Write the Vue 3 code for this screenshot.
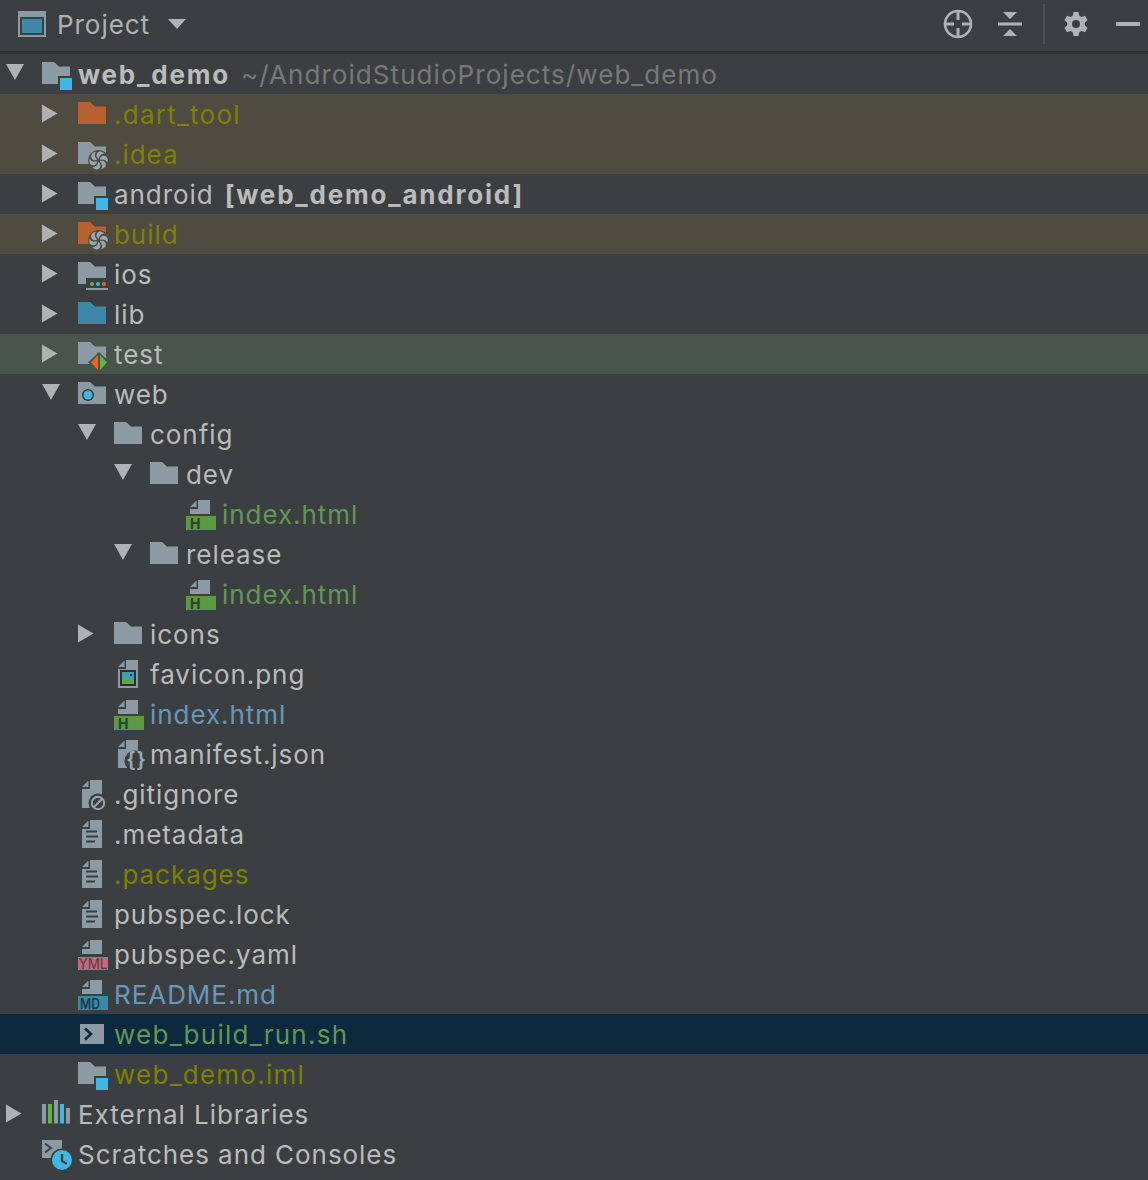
<script setup>
const nodes = [
  { depth: 0, arrow: 'down', icon: 'folder', badge: 'module', root: true, label: 'web_demo', hint: '~/AndroidStudioProjects/web_demo' },
  { depth: 1, arrow: 'right', icon: 'folder', tint: 'orange', label: '.dart_tool', color: 'olive', bg: 'ignored' },
  { depth: 1, arrow: 'right', icon: 'folder', badge: 'spin', label: '.idea', color: 'olive', bg: 'ignored' },
  { depth: 1, arrow: 'right', icon: 'folder', badge: 'module', label: 'android', extra: '[web_demo_android]' },
  { depth: 1, arrow: 'right', icon: 'folder', tint: 'orange', badge: 'spin', label: 'build', color: 'olive', bg: 'ignored' },
  { depth: 1, arrow: 'right', icon: 'folder', badge: 'ios', label: 'ios' },
  { depth: 1, arrow: 'right', icon: 'folder', tint: 'blue', label: 'lib' },
  { depth: 1, arrow: 'right', icon: 'folder', badge: 'test', label: 'test', bg: 'tested' },
  { depth: 1, arrow: 'down', icon: 'folder', badge: 'web', label: 'web' },
  { depth: 2, arrow: 'down', icon: 'folder', label: 'config' },
  { depth: 3, arrow: 'down', icon: 'folder', label: 'dev' },
  { depth: 4, icon: 'html', label: 'index.html', color: 'green' },
  { depth: 3, arrow: 'down', icon: 'folder', label: 'release' },
  { depth: 4, icon: 'html', label: 'index.html', color: 'green' },
  { depth: 2, arrow: 'right', icon: 'folder', label: 'icons' },
  { depth: 2, icon: 'png', label: 'favicon.png' },
  { depth: 2, icon: 'html', label: 'index.html', color: 'blue' },
  { depth: 2, icon: 'json', label: 'manifest.json' },
  { depth: 1, icon: 'ignore', label: '.gitignore' },
  { depth: 1, icon: 'text', label: '.metadata' },
  { depth: 1, icon: 'text', label: '.packages', color: 'olive' },
  { depth: 1, icon: 'text', label: 'pubspec.lock' },
  { depth: 1, icon: 'yml', label: 'pubspec.yaml' },
  { depth: 1, icon: 'md', label: 'README.md', color: 'blue' },
  { depth: 1, icon: 'shell', label: 'web_build_run.sh', color: 'green', bg: 'selected' },
  { depth: 1, icon: 'folder', badge: 'module', label: 'web_demo.iml', color: 'olive' },
  { depth: 0, arrow: 'right', icon: 'libs', label: 'External Libraries' },
  { depth: 0, icon: 'scratch', label: 'Scratches and Consoles' }
]

const bladeAngles = [0, 60, 120, 180, 240, 300]
const fileBody = 'M12 6H24V34H4V15H12Z'
const fileEar = 'M4 13L10.5 6.5V13Z'
</script>

<template>
  <div class="panel">
    <header class="toolbar">
      <svg class="tool-icon" width="28" height="26" viewBox="0 0 28 26">
        <path class="gray" d="M0 0H28V26H0ZM2 6V24H26V6Z" fill-rule="evenodd" />
        <rect x="4" y="8" width="20" height="14" fill="#3d87a8" />
      </svg>
      <span class="toolbar-title">Project</span>
      <svg class="caret" width="18" height="10" viewBox="0 0 18 10"><path d="M0 0H18L9 10Z" /></svg>
      <div class="toolbar-actions">
        <svg width="30" height="30" viewBox="0 0 30 30">
          <circle cx="15" cy="15" r="13" fill="none" stroke="#afb1b3" stroke-width="2.6" />
          <path d="M15 2V11M15 19V28M2 15H11M19 15H28" stroke="#afb1b3" stroke-width="3" />
        </svg>
        <svg width="24" height="30" viewBox="0 0 24 30">
          <path d="M0 13.5H24V16.5H0ZM5 3H19L12 10ZM12 20L19 27H5Z" fill="#afb1b3" />
        </svg>
        <span class="divider"></span>
        <svg width="26" height="26" viewBox="0 0 26 26">
          <path d="M10.5 1H15.5L16.2 4.6L18.6 6L22 4.8L24.5 9.2L21.8 11.5V14.5L24.5 16.8L22 21.2L18.6 20L16.2 21.4L15.5 25H10.5L9.8 21.4L7.4 20L4 21.2L1.5 16.8L4.2 14.5V11.5L1.5 9.2L4 4.8L7.4 6L9.8 4.6ZM13 9A4 4 0 1 0 13 17A4 4 0 1 0 13 9Z" fill="#afb1b3" fill-rule="evenodd" />
        </svg>
        <span class="minimize"></span>
      </div>
    </header>

    <div class="tree">
      <div
        v-for="(node, i) in nodes"
        :key="i"
        class="row"
        :class="node.bg"
        :style="{ paddingLeft: 6 + node.depth * 36 + 'px' }"
      >
        <span class="arrow">
          <svg v-if="node.arrow === 'right'" width="16" height="40" viewBox="0 0 16 40"><path d="M0 10.5L15.5 19.5L0 28.5Z" /></svg>
          <svg v-else-if="node.arrow === 'down'" width="18" height="40" viewBox="0 0 18 40"><path d="M0 10H18L9 26Z" /></svg>
        </span>

        <svg class="icon" width="36" height="40" viewBox="0 0 36 40">
          <template v-if="node.icon === 'folder'">
            <path :class="node.tint || 'gray'" d="M0 8H12L17 12.5H28V30H0Z" />
            <g v-if="node.badge === 'module'">
              <rect class="cut" x="16" y="22" width="14" height="14" />
              <rect x="18" y="24" width="12" height="12" fill="#40b6e0" />
            </g>
            <g v-else-if="node.badge === 'spin'">
              <circle class="cut" cx="20.5" cy="26.5" r="10.5" />
              <path
                v-for="a in bladeAngles"
                :key="a"
                class="blade"
                :transform="`translate(20.5 26.5) rotate(${a})`"
                d="M0 -1.5C-3 -3.5 -2.6 -7.8 1 -8.9C3 -9.2 5 -8.2 6.2 -6.6C3 -7 1 -5 0 -1.5Z"
              />
            </g>
            <g v-else-if="node.badge === 'ios'">
              <rect class="cut" x="8" y="24" width="22" height="12" />
              <circle cx="14" cy="30" r="2" fill="#62b543" />
              <circle cx="20" cy="30" r="2" fill="#40b6e0" />
              <circle cx="26" cy="30" r="2" fill="#f26522" />
              <rect class="gray" x="8" y="34" width="22" height="2" />
            </g>
            <g v-else-if="node.badge === 'test'">
              <path class="cut" d="M10 28.5L21 18L32 28.5L21 39Z" />
              <path d="M13 28.5L20 21V36Z" fill="#f26522" />
              <path d="M22 21L29 28.5L22 36Z" fill="#62b543" />
            </g>
            <g v-else-if="node.badge === 'web'">
              <circle cx="10" cy="21" r="6" fill="#2f3336" />
              <circle cx="10" cy="21" r="4.5" fill="#40b6e0" />
            </g>
          </template>

          <template v-else-if="node.icon === 'html' || node.icon === 'yml' || node.icon === 'md'">
            <path class="gray" d="M12 6H24V20H4V15H12Z" />
            <path class="gray" d="M4 13L10.5 6.5V13Z" />
            <template v-if="node.icon === 'html'">
              <rect x="0" y="22" width="30" height="14" fill="#599a42" />
              <text class="badge-text" x="4" y="34.5" font-size="14" fill="#28432a">H</text>
            </template>
            <template v-else-if="node.icon === 'yml'">
              <rect x="0" y="23" width="30" height="13" fill="#bf6a80" />
              <text class="badge-text thin" x="0.5" y="35" font-size="15" textLength="29" lengthAdjust="spacingAndGlyphs" fill="#5c3a44">YML</text>
            </template>
            <template v-else>
              <rect x="0" y="22" width="30" height="14" fill="#3d87a8" />
              <text class="badge-text semi" x="2" y="34.5" font-size="14" textLength="20" lengthAdjust="spacingAndGlyphs" fill="#1c3a4d">MD</text>
            </template>
          </template>

          <template v-else-if="node.icon === 'png'">
            <path class="gray" :d="fileBody" />
            <path class="gray" :d="fileEar" />
            <rect x="6" y="16" width="16" height="16" fill="#2b2f32" />
            <rect x="8" y="18" width="12" height="12" fill="#3d9cc4" />
            <path d="M8 25L12 22.5L20 27V30H8Z" fill="#62a543" />
            <circle cx="17" cy="21" r="1.2" fill="#2b2f32" />
          </template>

          <template v-else-if="node.icon === 'json'">
            <path class="gray" :d="fileBody" />
            <path class="gray" :d="fileEar" />
            <circle class="cut" cx="21" cy="27" r="10.5" />
            <text class="json-text" x="23" y="32" text-anchor="middle" font-size="20">{}</text>
          </template>

          <template v-else-if="node.icon === 'ignore'">
            <path class="gray" :d="fileBody" />
            <path class="gray" :d="fileEar" />
            <circle class="cut" cx="20" cy="29" r="9.5" />
            <circle cx="20" cy="29" r="6.2" fill="none" stroke="#9aa7b0" stroke-width="2" />
            <path d="M16 33L24 25" stroke="#9aa7b0" stroke-width="2" />
          </template>

          <template v-else-if="node.icon === 'text'">
            <path class="gray" :d="fileBody" />
            <path class="gray" :d="fileEar" />
            <path d="M8 17.5H19M8 22.5H20M8 27.5H17" stroke="#3c3f41" stroke-width="2" />
          </template>

          <template v-else-if="node.icon === 'shell'">
            <rect class="gray" x="2" y="10" width="24" height="20" />
            <path d="M7 14.5L13 20L7 25.5" fill="none" stroke="#0d293e" stroke-width="2.6" />
          </template>

          <template v-else-if="node.icon === 'libs'">
            <rect class="gray" x="0" y="10" width="4" height="19.5" />
            <rect x="6" y="10" width="4" height="19.5" fill="#62b543" />
            <rect class="gray" x="12" y="6" width="4" height="23.5" />
            <rect x="18" y="10" width="4" height="19.5" fill="#40b6e0" />
            <rect class="gray" x="24" y="14" width="4" height="15.5" />
          </template>

          <template v-else-if="node.icon === 'scratch'">
            <rect class="gray" x="0" y="6" width="20" height="18" />
            <path d="M3 9.5L9 14L3 18.5" fill="none" stroke="#3c3f41" stroke-width="2" />
            <circle class="cut" cx="20" cy="26" r="11.5" />
            <circle cx="20" cy="26" r="10" fill="#40b6e0" />
            <path d="M20 20V27L25 30" fill="none" stroke="#3c3f41" stroke-width="2.2" />
          </template>
        </svg>

        <span class="label" :class="[node.color, { bold: node.root, wide: node.label.includes('_') }]">{{ node.label }}</span>
        <span v-if="node.extra" class="label bold extra">{{ node.extra }}</span>
        <span v-if="node.hint" class="hint">{{ node.hint }}</span>
      </div>
    </div>
  </div>
</template>

<style scoped>
.panel {
  width: 1148px;
  height: 1180px;
  overflow: hidden;
  background: #3c3f41;
  font-family: Inter, "Liberation Sans", sans-serif;
  font-size: 26px;
  letter-spacing: 0.95px;
  color: #bbbbbb;
}

.toolbar {
  display: flex;
  align-items: center;
  height: 48px;
  padding-left: 18px;
  padding-bottom: 3px;
  border-bottom: 3px solid #323232;
}

.toolbar-title {
  margin-left: 11px;
  color: #afb1b3;
}

.caret {
  margin-left: 18px;
  fill: #afb1b3;
}

.toolbar-actions {
  display: flex;
  align-items: center;
  margin-left: auto;
  margin-right: 8px;
}

.toolbar-actions svg:nth-child(1) {
  margin-right: 25px;
}

.divider {
  width: 2px;
  height: 40px;
  margin: 0 18px 0 21px;
  background: #515151;
}

.minimize {
  width: 24px;
  height: 4px;
  margin-left: 27px;
  background: #afb1b3;
}

.row {
  --row-bg: #3c3f41;
  display: flex;
  align-items: center;
  height: 40px;
  white-space: nowrap;
  background: var(--row-bg);
}

.row.ignored {
  --row-bg: #4f4b41;
}

.row.tested {
  --row-bg: #49544a;
}

.row.selected {
  --row-bg: #0d293e;
}

.arrow {
  display: block;
  flex: none;
  width: 36px;
  height: 40px;
  fill: #afb1b3;
}

.icon {
  flex: none;
  overflow: visible;
}

.gray {
  fill: #8c9aa4;
}

.blade {
  fill: #9aa7b0;
}

.orange {
  fill: #b8602f;
}

.blue {
  fill: #3d87a8;
}

.cut {
  fill: var(--row-bg);
}

.badge-text {
  font-family: Inter, "Liberation Sans", sans-serif;
  font-weight: 700;
  letter-spacing: 0;
}

.badge-text.semi {
  font-weight: 600;
}

.badge-text.thin {
  font-weight: 400;
}

.json-text {
  font-family: "Liberation Sans", sans-serif;
  font-weight: 700;
  letter-spacing: 2px;
  fill: #9aa7b0;
}

.label {
  padding-top: 1px;
  color: #bbbbbb;
}

.label.wide {
  letter-spacing: 1.25px;
}

.label.olive {
  color: #808000;
}

.label.green {
  color: #629755;
}

.label.blue {
  color: #6897bb;
}

.label.bold {
  font-weight: 700;
  letter-spacing: 1.8px;
}

.extra {
  margin-left: 11px;
}

.hint {
  margin-left: 11px;
  padding-top: 1px;
  letter-spacing: 1.06px;
  color: #787878;
}
</style>

<style>
html,
body {
  background: #3c3f41;
}
</style>
